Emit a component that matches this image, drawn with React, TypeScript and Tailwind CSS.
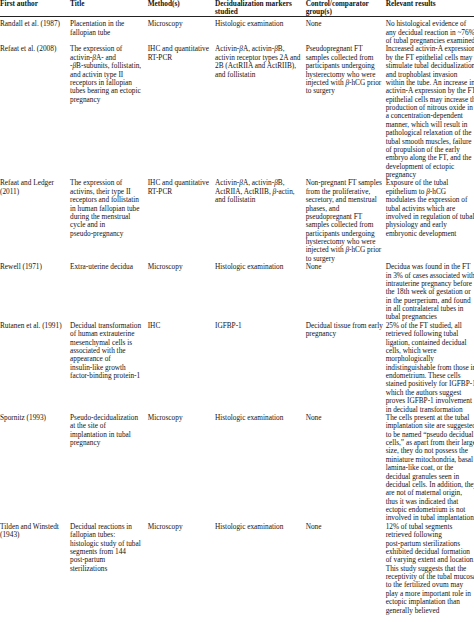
import React from "react";

const B = () => <span className="italic">β</span>;

type Cell = React.ReactNode[];

const rows: Cell[][] = [
  [
    ["Randall et al. (1987)"],
    ["Placentation in the", "fallopian tube"],
    ["Microscopy"],
    ["Histologic examination"],
    ["None"],
    ["No histological evidence of", "any decidual reaction in ~76%", "of tubal pregnancies examined"],
  ],
  [
    ["Refaat et al. (2008)"],
    [
      "The expression of",
      <>activin-<B />A- and</>,
      <>-<B />B-subunits, follistatin,</>,
      "and activin type II",
      "receptors in fallopian",
      "tubes bearing an ectopic",
      "pregnancy",
    ],
    ["IHC and quantitative", "RT-PCR"],
    [
      <>Activin-<B />A, activin-<B />B,</>,
      "activin receptor types 2A and",
      "2B (ActRIIA and ActRIIB),",
      "and follistatin",
    ],
    [
      "Pseudopregnant FT",
      "samples collected from",
      "participants undergoing",
      "hysterectomy who were",
      <>injected with <B />-hCG prior</>,
      "to surgery",
    ],
    [
      "Increased activin-A expression",
      "by the FT epithelial cells may",
      "stimulate tubal decidualization",
      "and trophoblast invasion",
      "within the tube. An increase in",
      "activin-A expression by the FT",
      "epithelial cells may increase the",
      "production of nitrous oxide in",
      "a concentration-dependent",
      "manner, which will result in",
      "pathological relaxation of the",
      "tubal smooth muscles, failure",
      "of propulsion of the early",
      "embryo along the FT, and the",
      "development of ectopic",
      "pregnancy",
    ],
  ],
  [
    ["Refaat and Ledger", "(2011)"],
    [
      "The expression of",
      "activins, their type II",
      "receptors and follistatin",
      "in human fallopian tube",
      "during the menstrual",
      "cycle and in",
      "pseudo-pregnancy",
    ],
    ["IHC and quantitative", "RT-PCR"],
    [
      <>Activin-<B />A, activin-<B />B,</>,
      <>ActRIIA, ActRIIB, <B />-actin,</>,
      "and follistatin",
    ],
    [
      "Non-pregnant FT samples",
      "from the proliferative,",
      "secretory, and menstrual",
      "phases, and",
      "pseudopregnant FT",
      "samples collected from",
      "participants undergoing",
      "hysterectomy who were",
      <>injected with <B />-hCG prior</>,
      "to surgery",
    ],
    [
      "Exposure of the tubal",
      <>epithelium to <B />-hCG</>,
      "modulates the expression of",
      "tubal activins which are",
      "involved in regulation of tubal",
      "physiology and early",
      "embryonic development",
    ],
  ],
  [
    ["Rewell (1971)"],
    ["Extra-uterine decidua"],
    ["Microscopy"],
    ["Histologic examination"],
    ["None"],
    [
      "Decidua was found in the FT",
      "in 3% of cases associated with",
      "intrauterine pregnancy before",
      "the 18th week of gestation or",
      "in the puerperium, and found",
      "in all contralateral tubes in",
      "tubal pregnancies",
    ],
  ],
  [
    ["Rutanen et al. (1991)"],
    [
      "Decidual transformation",
      "of human extrauterine",
      "mesenchymal cells is",
      "associated with the",
      "appearance of",
      "insulin-like growth",
      "factor-binding protein-1",
    ],
    ["IHC"],
    ["IGFBP-1"],
    ["Decidual tissue from early", "pregnancy"],
    [
      "25% of the FT studied, all",
      "retrieved following tubal",
      "ligation, contained decidual",
      "cells, which were",
      "morphologically",
      "indistinguishable from those in",
      "endometrium. These cells",
      "stained positively for IGFBP-1,",
      "which the authors suggest",
      "proves IGFBP-1 involvement",
      "in decidual transformation",
    ],
  ],
  [
    ["Spornitz (1993)"],
    ["Pseudo-decidualization", "at the site of", "implantation in tubal", "pregnancy"],
    ["Microscopy"],
    ["Histologic examination"],
    ["None"],
    [
      "The cells present at the tubal",
      "implantation site are suggested",
      "to be named \u201cpseudo decidual",
      "cells,\u201d as apart from their larger",
      "size, they do not possess the",
      "miniature mitochondria, basal",
      "lamina-like coat, or the",
      "decidual granules seen in",
      "decidual cells. In addition, they",
      "are not of maternal origin,",
      "thus it was indicated that",
      "ectopic endometrium is not",
      "involved in tubal implantation",
    ],
  ],
  [
    ["Tilden and Winstedt", "(1943)"],
    [
      "Decidual reactions in",
      "fallopian tubes:",
      "histologic study of tubal",
      "segments from 144",
      "post-partum",
      "sterilizations",
    ],
    ["Microscopy"],
    ["Histologic examination"],
    ["None"],
    [
      "12% of tubal segments",
      "retrieved following",
      "post-partum sterilizations",
      "exhibited decidual formation",
      "of varying extent and location.",
      "This study suggests that the",
      "receptivity of the tubal mucosa",
      "to the fertilized ovum may",
      "play a more important role in",
      "ectopic implantation than",
      "generally believed",
    ],
  ],
];

const header: string[][] = [
  ["First author"],
  ["Title"],
  ["Method(s)"],
  ["Decidualization markers", "studied"],
  ["Control/comparator", "group(s)"],
  ["Relevant results"],
];

const gridCols =
  "grid grid-cols-[70px_77.7px_67.3px_90.7px_80px_110px]";

function Lines({ lines }: { lines: React.ReactNode[] }) {
  return (
    <div className="flex flex-col">
      {lines.map((l, i) => (
        <div key={i} className="whitespace-nowrap">
          {l}
        </div>
      ))}
    </div>
  );
}

export default function App() {
  return (
    <div
      className="w-[474px] h-[622px] overflow-hidden bg-white text-[#141414] text-[7.3px] leading-[8.37px]"
      style={{ fontFamily: '"Liberation Serif", "Times New Roman", serif' }}
    >
      <div className="w-[600px]">
        <div className={`${gridCols} font-bold h-[17px] border-b border-[#222]`}>
          {header.map((h, i) => (
            <Lines key={i} lines={h} />
          ))}
        </div>
        <div className="pt-[3.3px]">
          {rows.map((r, ri) => (
            <div key={ri} className={gridCols}>
              {r.map((c, ci) => (
                <Lines key={ci} lines={c} />
              ))}
            </div>
          ))}
        </div>
      </div>
    </div>
  );
}
